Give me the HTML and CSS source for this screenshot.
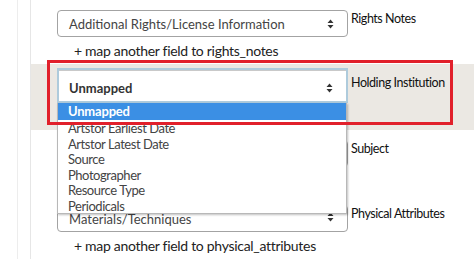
FILE: index.html
```html
<!DOCTYPE html>
<html lang="en">
<head>
    <meta charset="UTF-8">
    <title>Field mapping</title>
    <link rel="stylesheet" href="styles.css">
</head>
<body>
    <div class="page">
        <div class="panel">
            <div class="row">
                <div class="field">
                    <div class="select">
                        <span>Additional Rights/License Information</span>
                        <svg class="arrows" width="7" height="10" viewBox="0 0 7 10"><path d="M3.5 0.5 L6.5 4 L0.5 4 Z M3.5 9.5 L6.5 6 L0.5 6 Z" fill="#333"/></svg>
                    </div>
                    <div class="label">Rights Notes</div>
                </div>
                <div class="add">+ map another field to rights_notes</div>
            </div>

            <div class="row row-active">
                <div class="field">
                    <div class="select-wrap">
                        <div class="select select-open">
                            <span>Unmapped</span>
                            <svg class="arrows" width="7" height="10" viewBox="0 0 7 10"><path d="M3.5 0.5 L6.5 4 L0.5 4 Z M3.5 9.5 L6.5 6 L0.5 6 Z" fill="#333"/></svg>
                        </div>
                        <ul class="options">
                            <li class="selected">Unmapped</li>
                            <li>Artstor Earliest Date</li>
                            <li>Artstor Latest Date</li>
                            <li>Source</li>
                            <li>Photographer</li>
                            <li>Resource Type</li>
                            <li>Periodicals</li>
                        </ul>
                    </div>
                    <div class="label label-active">Holding Institution</div>
                </div>
                <div class="add"></div>
                <div class="callout"></div>
            </div>

            <div class="row">
                <div class="field">
                    <div class="select">
                        <span></span>
                        <svg class="arrows" width="7" height="10" viewBox="0 0 7 10"><path d="M3.5 0.5 L6.5 4 L0.5 4 Z M3.5 9.5 L6.5 6 L0.5 6 Z" fill="#333"/></svg>
                    </div>
                    <div class="label">Subject</div>
                </div>
                <div class="add"></div>
            </div>

            <div class="row row-last">
                <div class="field">
                    <div class="select">
                        <span>Materials/Techniques</span>
                        <svg class="arrows" width="7" height="10" viewBox="0 0 7 10"><path d="M3.5 0.5 L6.5 4 L0.5 4 Z M3.5 9.5 L6.5 6 L0.5 6 Z" fill="#333"/></svg>
                    </div>
                    <div class="label">Physical Attributes</div>
                </div>
                <div class="add">+ map another field to physical_attributes</div>
            </div>
        </div>
    </div>
</body>
</html>
```

FILE: styles.css
```css
* {
    margin: 0;
    padding: 0;
    box-sizing: border-box;
}
body {
    background: #fff;
    font-family: Lato, 'Liberation Sans', sans-serif;
    color: #222;
    overflow: hidden;
}
.page { margin-left: 17px; border-left: 1px solid #ededed; padding-left: 12px; height: 259px; }
.panel { border-left: 1px solid #e6e6e6; height: 259px; }

.row { position: relative; padding-top: 10px; }
.row-active { background: #ebe8e3; padding-top: 4px; height: 66px; }
.row-last { padding-top: 11px; }

.field { display: flex; align-items: flex-start; padding-left: 26px; }
.select {
    width: 291px; height: 27px;
    display: flex; align-items: center; justify-content: space-between;
    padding: 0 13px 0 11px;
    border: 1px solid #a3a3a3; border-radius: 4px;
    background: #fff; color: #444; font-size: 13px;
}
.row-last .select { align-items: flex-end; padding-bottom: 4px; }
.row-last .select .arrows { align-self: center; }
.select-wrap { position: relative; z-index: 2; }
.select-open {
    height: 35px; border-radius: 0;
    border: 2px solid #aecbdc; box-shadow: inset 0 1px 0 #c9c9c9;
    color: #333; font-weight: bold; padding-left: 10px; padding-top: 5px;
}
.arrows { flex: none; }
.label { margin-left: 3px; margin-top: 1px; font-size: 12.5px; letter-spacing: -0.45px; color: #111; }
.label-active { margin-top: 7px; }

.add { height: 27px; line-height: 28px; padding-left: 43px; font-size: 14px; letter-spacing: -0.3px; color: #222; }

.options {
    position: absolute; top: 35px; left: 0; width: 290px;
    list-style: none; background: #fff;
    border: 1px solid #b8b8b8; border-top: none;
    box-shadow: 1px 1px 2px rgba(0,0,0,0.25);
    font-size: 13px; letter-spacing: -0.45px; color: #444;
}
.options li { height: 15.5px; line-height: 16.5px; padding-left: 10px; }
.options li.selected { height: 17px; line-height: 17px; background: #3b8fe4; color: #fff; font-weight: bold; letter-spacing: -0.2px; }

.callout {
    position: absolute; z-index: 3;
    left: 16px; top: -4px; width: 406px; height: 65px;
    border: 3px solid #e1202b;
}
```
